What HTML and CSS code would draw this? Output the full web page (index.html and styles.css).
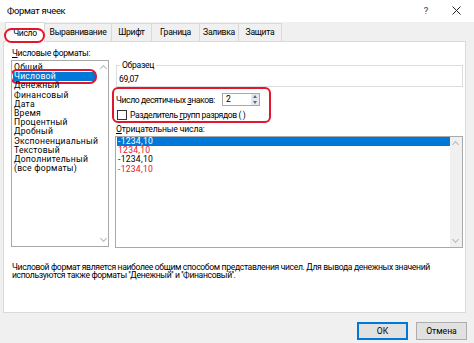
FILE: index.html
```html
<!DOCTYPE html>
<html>
<head>
    <title>Формат ячеек</title>
    <link rel="stylesheet" href="styles.css">
</head>
<body>
    <div class="dialog">
        <div class="titlebar">
            <span class="title">Формат ячеек</span>
            <span class="help">?</span>
            <span class="close">
                <svg width="9" height="9" viewBox="0 0 9 9"><path d="M0.5 0.5 L8.5 8.5 M8.5 0.5 L0.5 8.5" stroke="#222" stroke-width="1"/></svg>
            </span>
        </div>

        <div class="tabs">
            <div class="tab active">Число<span class="ring ring-tab"></span></div>
            <div class="tab w-align">Выравнивание</div>
            <div class="tab w-font">Шрифт</div>
            <div class="tab w-border">Граница</div>
            <div class="tab w-fill">Заливка</div>
            <div class="tab w-protect">Защита</div>
        </div>

        <div class="panel">
            <div class="columns">
                <div class="left">
                    <div class="caption"><u>Ч</u>исловые форматы:</div>
                    <div class="listbox formats">
                        <ul class="items">
                            <li class="cut">Общий</li>
                            <li class="selected">Числовой<span class="ring ring-item"></span></li>
                            <li>Денежный</li>
                            <li>Финансовый</li>
                            <li>Дата</li>
                            <li>Время</li>
                            <li>Процентный</li>
                            <li>Дробный</li>
                            <li>Экспоненциальный</li>
                            <li>Текстовый</li>
                            <li>Дополнительный</li>
                            <li>(все форматы)</li>
                        </ul>
                        <div class="scroll light">
                            <span class="chev up"></span>
                            <span class="chev down"></span>
                        </div>
                    </div>
                </div>

                <div class="right">
                    <fieldset class="sample">
                        <legend>Образец</legend>
                        <div class="sample-value">69,07</div>
                    </fieldset>

                    <div class="marked">
                        <div class="row">
                            <span class="row-label">Число десятичных <u>з</u>наков:</span>
                            <div class="spin">
                                <span class="spin-value">2</span>
                                <div class="spin-btns">
                                    <span class="tri tri-up"></span>
                                    <span class="tri tri-down"></span>
                                </div>
                            </div>
                        </div>
                        <div class="row">
                            <span class="check"></span>
                            <span class="check-label">Разделитель <u>г</u>рупп разрядов ( )</span>
                        </div>
                    </div>

                    <div class="caption neg-caption"><u>О</u>трицательные числа:</div>
                    <div class="listbox negatives">
                        <ul class="items">
                            <li class="selected wide">-1234,10</li>
                            <li class="red">1234,10</li>
                            <li>-1234,10</li>
                            <li class="red">-1234,10</li>
                        </ul>
                        <div class="scroll grey">
                            <span class="chev up"></span>
                            <span class="chev down"></span>
                        </div>
                    </div>
                </div>
            </div>

            <p class="desc">Числовой формат является наиболее общим способом представления чисел. Для вывода денежных значений используются также форматы ''Денежный'' и ''Финансовый''.</p>
        </div>

        <div class="footer">
            <button class="btn default">ОК</button>
            <button class="btn">Отмена</button>
        </div>
    </div>
</body>
</html>
```

FILE: styles.css
```css
body {
    margin: 0;
    padding: 0;
    background-color: #f0f0f0;
    font-family: Roboto, "Noto Sans", sans-serif;
    font-size: 8.6px;
    letter-spacing: -0.3px;
    color: #000;
}

.dialog {
    width: 474px;
    height: 343px;
    overflow: hidden;
}

/* title bar */
.titlebar {
    height: 22px;
    background-color: #fff;
    display: flex;
    align-items: center;
    padding: 0 13px 2px 7px;
    box-sizing: border-box;
    font-size: 9.4px;
}

.title {
    flex: 1;
}

.help {
    color: #333;
    margin-right: 24px;
}

.close {
    display: flex;
}

/* tabs */
.tabs {
    display: flex;
    height: 19px;
    padding-left: 5px;
    align-items: flex-end;
}

.tab {
    position: relative;
    height: 18px;
    box-sizing: border-box;
    border: 1px solid #d9d9d9;
    border-bottom: none;
    border-left: none;
    display: flex;
    align-items: center;
    justify-content: center;
    padding-bottom: 1px;
}

.tab.active {
    width: 40px;
    height: 20px;
    margin-bottom: -1px;
    background-color: #fff;
    border-left: 1px solid #d9d9d9;
    padding-top: 2px;
    z-index: 2;
}

.w-align { width: 67px; }
.w-font { width: 40px; }
.w-border { width: 48px; }
.w-fill { width: 39px; }
.w-protect { width: 43px; }

/* red annotation rings */
.ring {
    position: absolute;
    border: 2px solid #e2162c;
    border-radius: 8px;
    pointer-events: none;
}

.ring-tab {
    left: -2px;
    top: 5px;
    width: 37px;
    height: 11px;
}

.ring-item {
    left: -3px;
    top: -3px;
    width: 83px;
    height: 11px;
    border-radius: 7px;
}

/* main panel */
.panel {
    margin: 0 8px 0 3px;
    height: 272px;
    box-sizing: border-box;
    background-color: #fff;
    border: 1px solid #dadada;
    padding: 6px 3px 0 7px;
}

.columns {
    display: flex;
    gap: 6px;
}

.left {
    width: 98px;
}

.right {
    flex: 1;
}

.caption {
    height: 11px;
    line-height: 11px;
    padding-left: 1px;
    white-space: nowrap;
}

.neg-caption {
    margin-top: 1px;
    letter-spacing: -0.15px;
}

.caption u,
.row u {
    text-decoration-thickness: 1px;
    text-underline-offset: 1px;
}

/* list boxes */
.listbox {
    position: relative;
    margin-top: 1px;
    border: 1px solid #a9a9a9;
    box-sizing: border-box;
    display: flex;
    overflow: hidden;
}

.formats {
    height: 187px;
}

.negatives {
    height: 112px;
    margin-top: 1px;
}

.items {
    list-style: none;
    margin: 0;
    padding: 0 0 0 1px;
    flex: 1;
    line-height: 9.2px;
    letter-spacing: 0.25px;
}

.formats .items {
    margin-top: 2px;
}

.items li {
    position: relative;
    padding-left: 1px;
    height: 9.2px;
    white-space: nowrap;
}

.items li.selected {
    background-color: #0078d7;
    color: #fff;
    width: 81px;
}

.items li.selected.wide {
    width: auto;
}

.items li.red {
    color: #e8112d;
}

.scroll {
    width: 11px;
    position: relative;
}

.scroll.light {
    background-color: #fff;
}

.scroll.grey {
    background-color: #f0f0f0;
    width: 12px;
}

.chev {
    position: absolute;
    left: 3px;
    width: 4px;
    height: 4px;
    border-left: 1px solid #b8b8b8;
    border-top: 1px solid #b8b8b8;
}

.chev.up {
    top: 5px;
    transform: rotate(45deg);
}

.chev.down {
    bottom: 5px;
    transform: rotate(225deg);
}

/* sample group */
.sample {
    margin: 12px 0 0 1px;
    padding: 0 3px 1px 2px;
    border: 1px solid #dcdcdc;
    min-inline-size: 0;
    width: 347px;
    box-sizing: border-box;
}

.sample legend {
    padding: 0 2px;
    margin-left: 1px;
    line-height: 11px;
}

.sample-value {
    line-height: 11px;
    padding-top: 3px;
}

/* decimals + separator block */
.marked {
    margin-left: -3px;
    width: 159px;
    box-sizing: border-box;
    border: 2px solid #e2162c;
    border-radius: 6px;
    padding: 3px 0 0 2px;
    height: 36px;
}

.row {
    display: flex;
    align-items: center;
    height: 15px;
    white-space: nowrap;
}

.row-label {
    width: 106px;
    letter-spacing: -0.4px;
}

.check-label {
    letter-spacing: -0.4px;
}

.spin {
    width: 38px;
    height: 13px;
    box-sizing: border-box;
    border: 1px solid #a9a9a9;
    display: flex;
}

.spin-value {
    flex: 1;
    padding-left: 3px;
    line-height: 11px;
}

.spin-btns {
    width: 8px;
    background-color: #e3e8ee;
    display: flex;
    flex-direction: column;
    justify-content: space-around;
    align-items: center;
}

.tri {
    width: 0;
    height: 0;
    border-left: 2.5px solid transparent;
    border-right: 2.5px solid transparent;
}

.tri-up {
    border-bottom: 3px solid #5a6a7a;
}

.tri-down {
    border-top: 3px solid #5a6a7a;
}

.check {
    width: 10px;
    height: 10px;
    box-sizing: border-box;
    border: 1px solid #333;
    margin: 0 3px 0 1px;
    background-color: #fff;
}

/* description */
.desc {
    margin: 15px 0 0 1px;
    line-height: 8.4px;
    letter-spacing: -0.35px;
}

/* footer */
.footer {
    display: flex;
    justify-content: flex-end;
    gap: 8px;
    padding: 9px 7px 0 0;
}

.btn {
    width: 51px;
    height: 18px;
    background-color: #e1e1e1;
    border: 1px solid #adadad;
    font-family: Roboto, "Noto Sans", sans-serif;
    font-size: 8.6px;
    padding: 0;
    color: #000;
}

.btn.default {
    border: 1px solid #0078d7;
    box-shadow: inset 0 0 0 1px #0078d7;
}
```
